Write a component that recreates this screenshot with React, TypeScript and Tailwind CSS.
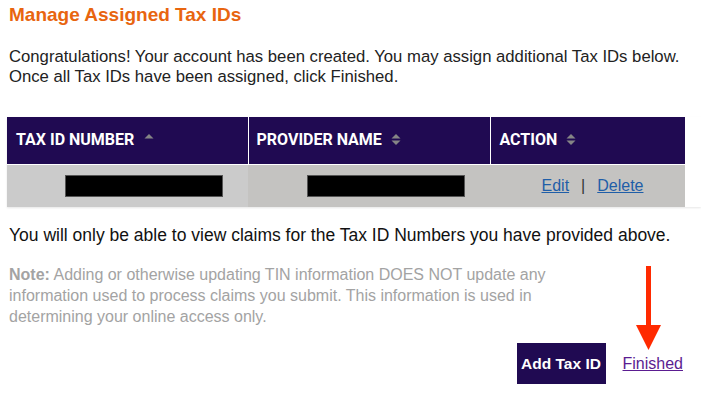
export default function App() {
  return (
    <div className="relative h-[411px] w-[701px] overflow-hidden bg-white font-['Liberation_Sans',Arial,sans-serif]">
      <div className="px-[9px] pt-[4px]">
        {/* Title */}
        <h1 className="text-[19px] font-bold leading-[22px] text-[#e8650f]">
          Manage Assigned Tax IDs
        </h1>

        <p className="mt-[21px] text-[16.7px] leading-[20px] text-[#222]">
          Congratulations! Your account has been created. You may assign additional Tax IDs below.
          <br />
          Once all Tax IDs have been assigned, click Finished.
        </p>
      </div>

      {/* Table */}
      <div className="ml-[7px] mt-[30px] w-[694px] shadow-[0_1px_2px_rgba(0,0,0,0.1)]">
        <table className="w-[678px] border-collapse">
          <thead>
            <tr className="h-[47px] bg-[#200a52] font-['Roboto',sans-serif] text-[16px] font-bold text-white">
              <th className="w-[241px] border-r border-b border-white pl-[9px] text-left">
                <span className="inline-flex items-center gap-[10px]">
                  TAX ID NUMBER
                  <SortIcon up />
                </span>
              </th>
              <th className="w-[242px] border-r border-b border-white pl-[8px] text-left">
                <span className="inline-flex items-center gap-[9px]">
                  PROVIDER NAME
                  <SortIcon up down />
                </span>
              </th>
              <th className="border-b border-white pl-[9px] text-left">
                <span className="inline-flex items-center gap-[9px]">
                  ACTION
                  <SortIcon up down />
                </span>
              </th>
            </tr>
          </thead>
          <tbody>
            <tr className="h-[43px]">
              <td className="bg-[#cbcbcb]">
                <div className="ml-[58px] h-[22px] w-[158px] border border-[#555] bg-black" />
              </td>
              <td className="bg-[#c4c3c1]">
                <div className="ml-[59px] h-[22px] w-[158px] border border-[#555] bg-black" />
              </td>
              <td className="bg-[#c4c3c1] pl-[10px] text-center text-[16px] text-[#333]">
                <a href="#" className="text-[#1f5ea8] underline">Edit</a>
                <span className="mx-[12px]">|</span>
                <a href="#" className="text-[#1f5ea8] underline">Delete</a>
              </td>
            </tr>
          </tbody>
        </table>
      </div>

      <div className="px-[9px]">
        <p className="mt-[18px] whitespace-nowrap text-[17.5px] leading-[20px] text-[#111]">
          You will only be able to view claims for the Tax ID Numbers you have provided above.
        </p>

        <p className="mt-[19px] w-[560px] text-[16px] leading-[21px] text-[#a3a3a3]">
          <span className="font-bold">Note:</span> Adding or otherwise updating TIN information DOES NOT update any
          information used to process claims you submit. This information is used in
          determining your online access only.
        </p>

        {/* Actions */}
        <div className="mt-[16px] flex items-center justify-end pr-[9px]">
          <button className="h-[41px] w-[89px] bg-[#200a52] text-[15.5px] font-bold text-white">
            Add Tax ID
          </button>
          <a href="#" className="ml-[17px] text-[16px] text-[#5b1d91] underline">
            Finished
          </a>
        </div>
      </div>

      {/* Red arrow annotation */}
      <svg className="absolute left-[634px] top-[266px]" width="30" height="86" viewBox="0 0 30 86">
        <rect x="12" y="0" width="5" height="62" fill="#ff2a00" />
        <polygon points="2,59 27,59 14.5,84" fill="#ff2a00" />
      </svg>
    </div>
  );
}

function SortIcon({ up, down }: { up?: boolean; down?: boolean }) {
  return (
    <svg width="10" height="11" viewBox="0 0 10 11" className="mt-[-2px] text-[#858585]">
      {up && <polygon points="0.5,4.5 9.5,4.5 5,0" fill="currentColor" />}
      {down && <polygon points="0.5,6.5 9.5,6.5 5,11" fill="currentColor" />}
    </svg>
  );
}
